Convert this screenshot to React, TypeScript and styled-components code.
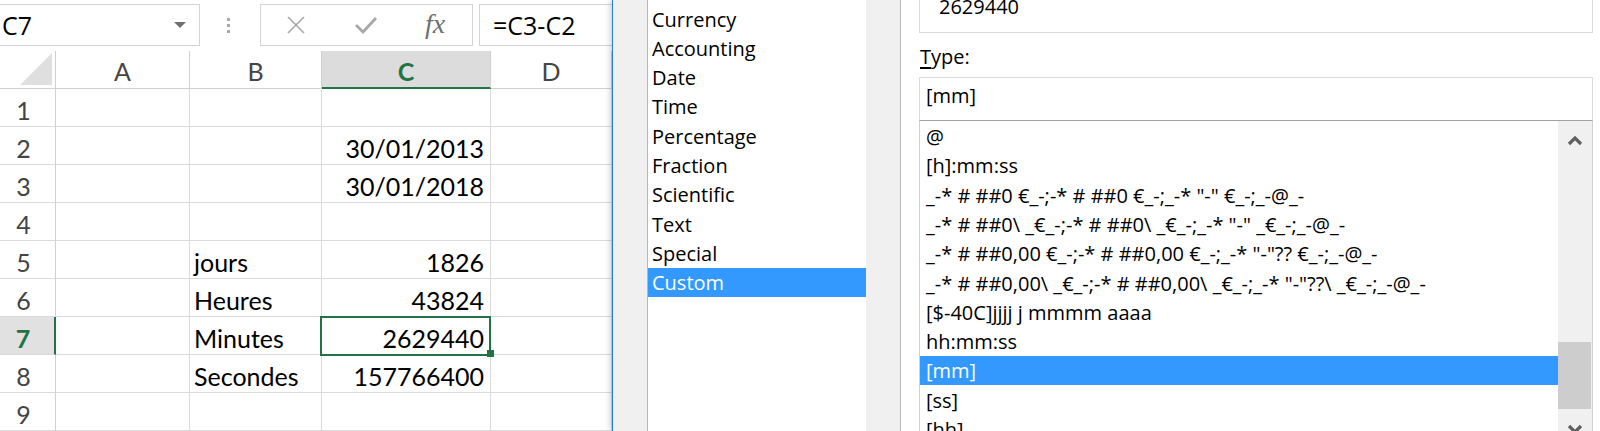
import React from "react";
import styled, { createGlobalStyle } from "styled-components";

const EXCEL_GREEN = "#217346";
const GRID_LINE = "#dadada";
const HEAD_LINE = "#d0d0d0";
const SELECTED = "#3399ff";
const CELL_FONT = `"Lato", "Liberation Sans", sans-serif`;
const UI_FONT = `"Open Sans", "Noto Sans", sans-serif`;

const GlobalStyle = createGlobalStyle`
  html, body {
    margin: 0;
    padding: 0;
    background: #fff;
    overflow: hidden;
  }
`;

const Page = styled.div`
  display: flex;
  width: 1600px;
  height: 431px;
  overflow: hidden;
  background: #fff;
`;

/* ---------- spreadsheet side ---------- */

const Sheet = styled.div`
  width: 612px;
  flex-shrink: 0;
  display: flex;
  flex-direction: column;
`;

const FormulaBar = styled.div`
  height: 53px;
  box-sizing: border-box;
  padding-top: 4px;
  display: flex;
  align-items: flex-start;
  font-family: ${UI_FONT};
  font-size: 25px;
  color: #000;
`;

const NameBox = styled.div`
  width: 200px;
  height: 42px;
  box-sizing: border-box;
  border: 1px solid #d4d4d4;
  border-left: none;
  display: flex;
  align-items: center;
  justify-content: space-between;
  padding: 0 13px 0 2px;
  line-height: 40px;
`;

const Grip = styled.div`
  width: 60px;
  height: 42px;
  display: flex;
  flex-direction: column;
  align-items: center;
  justify-content: center;
  gap: 3px;
  padding-right: 4px;
  box-sizing: border-box;
`;

const GripDot = styled.span`
  width: 3px;
  height: 3px;
  background: #a8a8a8;
`;

const FxGroup = styled.div`
  width: 213px;
  height: 42px;
  box-sizing: border-box;
  border: 1px solid #d4d4d4;
  display: flex;
  align-items: center;
  gap: 47px;
  padding-left: 24px;
`;

const FxLabel = styled.span`
  font-family: "Liberation Serif", serif;
  font-style: italic;
  font-size: 28px;
  color: #707070;
  line-height: 1;
  margin-top: -3px;
`;

const FormulaInput = styled.div`
  flex: 1;
  height: 42px;
  box-sizing: border-box;
  margin-left: 6px;
  border: 1px solid #d4d4d4;
  border-right: none;
  padding-left: 13px;
  line-height: 40px;
`;

const Grid = styled.div`
  display: grid;
  grid-template-columns: 56px 134px 132px 169px 1fr;
  grid-auto-rows: 38px;
  font-family: ${CELL_FONT};
  font-size: 25px;
`;

const Corner = styled.div`
  box-sizing: border-box;
  display: flex;
  align-items: flex-end;
  justify-content: flex-end;
  padding: 0 3px 3px 0;
  border-right: 1px solid ${HEAD_LINE};
  border-bottom: 1px solid ${HEAD_LINE};
`;

const ColHeader = styled.div<{ $active?: boolean }>`
  box-sizing: border-box;
  text-align: center;
  padding-top: 4px;
  line-height: 33px;
  color: ${(p) => (p.$active ? EXCEL_GREEN : "#444")};
  font-weight: ${(p) => (p.$active ? 700 : 400)};
  background: ${(p) => (p.$active ? "#dcdcdc" : "#fff")};
  border-right: 1px solid ${HEAD_LINE};
  border-bottom: ${(p) => (p.$active ? `2px solid ${EXCEL_GREEN}` : `1px solid ${HEAD_LINE}`)};
`;

const RowHeader = styled.div<{ $active?: boolean }>`
  box-sizing: border-box;
  text-align: center;
  padding: 5px 8px 0 0;
  line-height: 32px;
  color: ${(p) => (p.$active ? EXCEL_GREEN : "#444")};
  font-weight: ${(p) => (p.$active ? 700 : 400)};
  background: ${(p) => (p.$active ? "#e1e1e1" : "#fff")};
  border-right: ${(p) => (p.$active ? `2px solid ${EXCEL_GREEN}` : `1px solid ${HEAD_LINE}`)};
  border-bottom: 1px solid ${GRID_LINE};
`;

const Cell = styled.div<{ $right?: boolean; $selected?: boolean }>`
  box-sizing: border-box;
  padding: 5px 6px 0 4px;
  line-height: 32px;
  white-space: nowrap;
  color: #000;
  text-align: ${(p) => (p.$right ? "right" : "left")};
  border-right: 1px solid ${GRID_LINE};
  border-bottom: 1px solid ${GRID_LINE};
  ${(p) =>
    p.$selected &&
    `
    position: relative;
    &::after {
      content: "";
      position: absolute;
      left: -2px;
      top: -1px;
      right: -1px;
      bottom: -2px;
      border: 2px solid ${EXCEL_GREEN};
      pointer-events: none;
    }
    &::before {
      content: "";
      position: absolute;
      right: -4px;
      bottom: -3px;
      width: 7px;
      height: 7px;
      background: ${EXCEL_GREEN};
      z-index: 2;
    }
  `}
`;

/* ---------- format cells dialog side ---------- */

const Dialog = styled.div`
  flex: 1;
  display: flex;
  position: relative;
  background: #f0f0f0;
  border-left: 1px solid #2b7cd3;
  box-shadow: -2px 0 6px rgba(0, 0, 0, 0.18);
  padding-left: 34px;
  font-family: ${UI_FONT};
  font-size: 20px;
  color: #000;
`;

const CategoryBox = styled.div`
  width: 254px;
  flex-shrink: 0;
  box-sizing: border-box;
  display: flex;
  border-left: 1px solid #b8b8b8;
  border-right: 1px solid #b8b8b8;
`;

const CategoryItems = styled.div`
  flex: 1;
  background: #fff;
  padding-top: 4px;
`;

const ListRow = styled.div<{ $selected?: boolean; $indent: number }>`
  height: 29.3px;
  box-sizing: border-box;
  padding: 1.5px 0 0 ${(p) => p.$indent}px;
  line-height: 27.8px;
  white-space: nowrap;
  background: ${(p) => (p.$selected ? SELECTED : "transparent")};
  color: ${(p) => (p.$selected ? "#fff" : "#000")};
`;

const EmptyTrack = styled.div`
  width: 34px;
  background: #f0f0f0;
`;

const TypePanel = styled.div`
  flex: 1;
  min-width: 0;
  display: flex;
  flex-direction: column;
  background: #fff;
  padding: 0 7px 0 18px;
`;

const SampleBox = styled.div`
  height: 33px;
  box-sizing: border-box;
  border: 1px solid #dcdcdc;
  border-top: none;
  overflow: hidden;
  padding-left: 19px;
`;

const SampleText = styled.div`
  margin-top: -8px;
  line-height: 29px;
`;

const TypeLabel = styled.div`
  margin-top: 9px;
  padding-left: 1px;
  line-height: 29px;

  u {
    text-underline-offset: 3px;
  }
`;

const TypeInput = styled.div`
  margin-top: 6px;
  height: 43px;
  box-sizing: border-box;
  border: 1px solid #d9d9d9;
  border-bottom: none;
  padding: 3px 0 0 6px;
  line-height: 29px;
`;

const TypeList = styled.div`
  flex: 1;
  display: flex;
  min-height: 0;
  border: 1px solid #d0d0d0;
  border-top-color: #a0a0a0;
  border-bottom: none;
`;

const TypeItems = styled.div`
  flex: 1;
  min-width: 0;
  padding-top: 0.6px;
  overflow: hidden;
`;

const ScrollBar = styled.div`
  width: 34px;
  flex-shrink: 0;
  display: flex;
  flex-direction: column;
  background: #f0f0f0;
`;

const ScrollButton = styled.div`
  height: 39px;
  flex-shrink: 0;
  display: flex;
  align-items: center;
  justify-content: center;
`;

const Thumb = styled.div`
  height: 67px;
  flex-shrink: 0;
  margin: 182px 1px 0 0;
  background: #cdcdcd;
`;

/* ---------- drawings ---------- */

const CancelIcon = () => (
  <svg width="22" height="18" viewBox="0 0 22 18">
    <path d="M3 1 L19 17 M19 1 L3 17" stroke="#a8a8a8" strokeWidth="1.6" fill="none" />
  </svg>
);

const CheckIcon = () => (
  <svg width="24" height="18" viewBox="0 0 24 18">
    <path d="M2 9 L9 16 L22 2" stroke="#a8a8a8" strokeWidth="2.8" fill="none" />
  </svg>
);

const Caret = () => (
  <svg width="12" height="7" viewBox="0 0 12 7">
    <polygon points="0,0 12,0 6,6" fill="#707070" />
  </svg>
);

const CornerMark = () => (
  <svg width="32" height="32" viewBox="0 0 32 32">
    <polygon points="32,0 32,32 0,32" fill="#dfdfdf" />
  </svg>
);

const Chevron: React.FC<{ down?: boolean }> = ({ down }) => (
  <svg width="16" height="12" viewBox="0 0 16 12">
    <polyline
      points={down ? "2,3 8,9 14,3" : "2,9 8,3 14,9"}
      stroke="#606060"
      strokeWidth="3.2"
      fill="none"
    />
  </svg>
);

/* ---------- data ---------- */

const columns = ["A", "B", "C", "D"];

const rows: { n: number; b?: string; c?: string }[] = [
  { n: 1 },
  { n: 2, c: "30/01/2013" },
  { n: 3, c: "30/01/2018" },
  { n: 4 },
  { n: 5, b: "jours", c: "1826" },
  { n: 6, b: "Heures", c: "43824" },
  { n: 7, b: "Minutes", c: "2629440" },
  { n: 8, b: "Secondes", c: "157766400" },
  { n: 9 },
];

const categories = [
  "Currency",
  "Accounting",
  "Date",
  "Time",
  "Percentage",
  "Fraction",
  "Scientific",
  "Text",
  "Special",
  "Custom",
];

const formats = [
  "@",
  "[h]:mm:ss",
  '_-* # ##0 €_-;-* # ##0 €_-;_-* "-" €_-;_-@_-',
  '_-* # ##0\\ _€_-;-* # ##0\\ _€_-;_-* "-" _€_-;_-@_-',
  '_-* # ##0,00 €_-;-* # ##0,00 €_-;_-* "-"?? €_-;_-@_-',
  '_-* # ##0,00\\ _€_-;-* # ##0,00\\ _€_-;_-* "-"??\\ _€_-;_-@_-',
  "[$-40C]jjjj j mmmm aaaa",
  "hh:mm:ss",
  "[mm]",
  "[ss]",
  "[hh]",
];

const App: React.FC = () => {
  const activeRow = 7;
  return (
    <>
      <GlobalStyle />
      <Page>
        <Sheet>
          <FormulaBar>
            <NameBox>
              <span>C7</span>
              <Caret />
            </NameBox>
            <Grip>
              <GripDot />
              <GripDot />
              <GripDot />
            </Grip>
            <FxGroup>
              <CancelIcon />
              <CheckIcon />
              <FxLabel>fx</FxLabel>
            </FxGroup>
            <FormulaInput>=C3-C2</FormulaInput>
          </FormulaBar>

          <Grid>
            <Corner>
              <CornerMark />
            </Corner>
            {columns.map((col) => (
              <ColHeader key={col} $active={col === "C"}>
                {col}
              </ColHeader>
            ))}
            {rows.map((row) => (
              <React.Fragment key={row.n}>
                <RowHeader $active={row.n === activeRow}>{row.n}</RowHeader>
                <Cell />
                <Cell>{row.b}</Cell>
                <Cell $right $selected={row.n === activeRow}>
                  {row.c}
                </Cell>
                <Cell />
              </React.Fragment>
            ))}
          </Grid>
        </Sheet>

        <Dialog>
          <CategoryBox>
            <CategoryItems>
              {categories.map((cat) => (
                <ListRow key={cat} $indent={4} $selected={cat === "Custom"}>
                  {cat}
                </ListRow>
              ))}
            </CategoryItems>
            <EmptyTrack />
          </CategoryBox>

          <TypePanel>
            <SampleBox>
              <SampleText>2629440</SampleText>
            </SampleBox>
            <TypeLabel>
              <u>T</u>ype:
            </TypeLabel>
            <TypeInput>[mm]</TypeInput>
            <TypeList>
              <TypeItems>
                {formats.map((fmt) => (
                  <ListRow key={fmt} $indent={6} $selected={fmt === "[mm]"}>
                    {fmt}
                  </ListRow>
                ))}
              </TypeItems>
              <ScrollBar>
                <ScrollButton>
                  <Chevron />
                </ScrollButton>
                <Thumb />
                <ScrollButton>
                  <Chevron down />
                </ScrollButton>
              </ScrollBar>
            </TypeList>
          </TypePanel>
        </Dialog>
      </Page>
    </>
  );
};

export default App;
